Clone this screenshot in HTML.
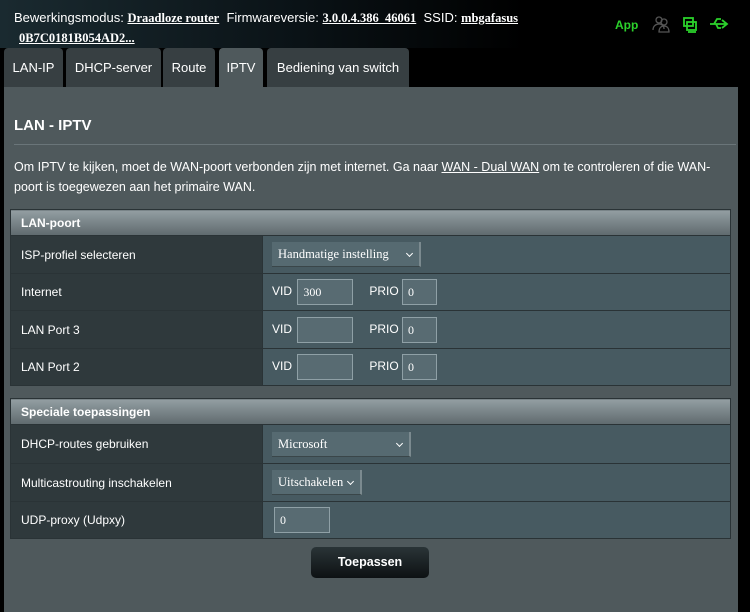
<!DOCTYPE html>
<html><head><meta charset="utf-8"><style>
*{box-sizing:border-box;margin:0;padding:0}
body{width:750px;height:612px;background:#000;font-family:"Liberation Sans",sans-serif;color:#fff;position:relative;overflow:hidden}
.top{position:absolute;left:0;top:0;width:750px;height:48px;background:linear-gradient(90deg,#1a2a30 0%,#0a1216 40%,#000 70%)}
.info{position:absolute;left:14px;top:8px;font-size:13px;line-height:20px;color:#fff}
.info b{font-family:"Liberation Serif",serif;text-decoration:underline;font-size:12.5px}
.tab{position:absolute;top:48px;height:39px;background:#373f42;border-radius:4px 4px 0 0;font-size:13px;line-height:39px;text-align:center;color:#fff}
.tab.on{background:#4f595c}
.panel{position:absolute;left:4px;top:87px;width:734px;height:525px;background:#4f595c}
h1{position:absolute;left:14px;top:117px;font-size:15px;font-weight:bold}
.line{position:absolute;left:14px;top:144px;width:722px;height:1px;background:#6a7579}
.desc{position:absolute;left:14px;top:157px;width:720px;font-size:12.5px;line-height:20px}
table{position:absolute;left:10px;width:721px;border-collapse:collapse;font-size:12px}
th{height:26px;text-align:left;padding-left:10px;background:linear-gradient(#939ea2,#5f6a6e);font-weight:bold;border:1px solid #2a3336}
td{border:1px solid #2a3336}
td.l{width:252px;background:#2f393c;padding-left:10px}
td.v{background:#475a61;padding-left:9px}
.in{display:inline-block;height:26px;border:1px solid #8fa0a6;background:#586b72;vertical-align:middle;font-family:"Liberation Serif",serif;font-size:12px;line-height:24px;padding-left:5px}
.sel{display:inline-block;height:25px;background:#566a71;border-right:2px solid #7b8a8f;border-bottom:1px solid #3a4649;font-family:"Liberation Serif",serif;font-size:12.5px;line-height:24px;padding-left:6px;position:relative;vertical-align:middle}
.sel:after{content:"";position:absolute;right:7px;top:9px;width:4px;height:4px;border-right:1px solid #fff;border-bottom:1px solid #fff;transform:rotate(45deg)}
.btn{position:absolute;left:311px;top:547px;width:118px;height:31px;border-radius:5px;background:linear-gradient(#2a3437,#0d1113);font-size:12.5px;font-weight:bold;text-align:center;line-height:31px}
</style></head><body>
<div class="top"></div>
<div class="info">Bewerkingsmodus: <b>Draadloze router</b>&nbsp; Firmwareversie: <b>3.0.0.4.386_46061</b>&nbsp; SSID: <b>mbgafasus</b><br><b style="margin-left:5px">0B7C0181B054AD2...</b></div>
<div style="position:absolute;left:615px;top:18px;color:#2bd12b;font-weight:bold;font-size:12px">App</div>
<svg style="position:absolute;left:650px;top:14px" width="90" height="22" viewBox="0 0 90 22"><g fill="none" stroke="#555" stroke-width="1.3"><circle cx="9" cy="6" r="3"/><circle cx="14" cy="8" r="3"/><path d="M3 16c0-4 3-6 6-6s5 2 5 5M9 18c0-4 2-6 5-6s5 2 5 6z"/></g><g fill="none" stroke="#2bd12b" stroke-width="1.8"><rect x="34" y="4" width="9" height="8"/><rect x="37" y="8" width="9" height="8"/><path d="M38 18h8"/><path d="M60 10h16M72 6l5 4-5 4M64 10l3-5h4M66 10l2 4h3"/></g></svg>
<div class="tab" style="left:4px;width:59px">LAN-IP</div>
<div class="tab" style="left:66px;width:95px">DHCP-server</div>
<div class="tab" style="left:163px;width:52px">Route</div>
<div class="tab on" style="left:219px;width:44px">IPTV</div>
<div class="tab" style="left:267px;width:142px">Bediening van switch</div>
<div class="panel"></div>
<h1>LAN - IPTV</h1><div class="line"></div>
<div class="desc">Om IPTV te kijken, moet de WAN-poort verbonden zijn met internet. Ga naar <u>WAN - Dual WAN</u> om te controleren of die WAN-poort is toegewezen aan het primaire WAN.</div>
<table style="top:209px">
<tr><th colspan="2">LAN-poort</th></tr>
<tr style="height:38px"><td class="l">ISP-profiel selecteren</td><td class="v"><span class="sel" style="width:149px">Handmatige instelling</span></td></tr>
<tr style="height:37px"><td class="l">Internet</td><td class="v">VID <span class="in" style="width:56px;margin-left:2px">300</span><span style="margin-left:16px">PRIO</span> <span class="in" style="width:35px;margin-left:0">0</span></td></tr>
<tr style="height:38px"><td class="l">LAN Port 3</td><td class="v">VID <span class="in" style="width:56px;margin-left:2px"></span><span style="margin-left:16px">PRIO</span> <span class="in" style="width:35px;margin-left:0">0</span></td></tr>
<tr style="height:37px"><td class="l">LAN Port 2</td><td class="v">VID <span class="in" style="width:56px;margin-left:2px"></span><span style="margin-left:16px">PRIO</span> <span class="in" style="width:35px;margin-left:0">0</span></td></tr>
</table>
<table style="top:398px">
<tr><th colspan="2">Speciale toepassingen</th></tr>
<tr style="height:39px"><td class="l">DHCP-routes gebruiken</td><td class="v"><span class="sel" style="width:139px">Microsoft</span></td></tr>
<tr style="height:38px"><td class="l">Multicastrouting inschakelen</td><td class="v"><span class="sel" style="width:90px">Uitschakelen</span></td></tr>
<tr style="height:37px"><td class="l">UDP-proxy (Udpxy)</td><td class="v"><span class="in" style="width:56px;margin-left:2px">0</span></td></tr>
</table>
<div class="btn">Toepassen</div>
</body></html>
